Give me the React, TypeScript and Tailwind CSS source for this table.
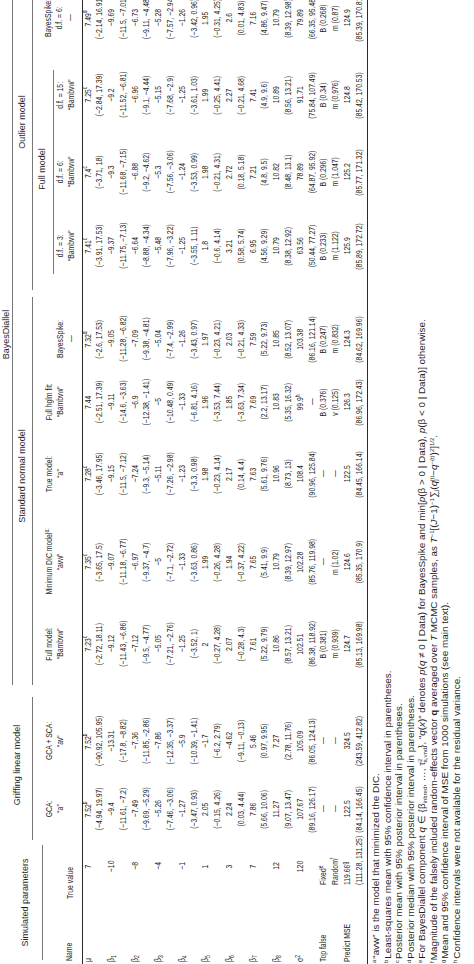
import { Fragment } from "react";

// one track per table column; widths keep each column centred where the scan has it
const grid =
  "grid grid-cols-[68px_60px_54px_82px_112px_52px_124px_20px_106px_80px_68px_86px_68px]";

type Row = { name: string; sub?: string; truth: string; special?: boolean; cells: string[] };

const rows: Row[] = [
  {
    name: "μ",
    truth: "7",
    cells: [
      "7.52^b|(−4.94, 19.97)",
      "7.52^b|(−90.92, 105.95)",
      "7.23^c|(−2.72, 18.11)",
      "7.35^c|(−3.65, 17.5)",
      "7.28^c|(−3.46, 17.95)",
      "7.44|(−2.51, 17.39)",
      "7.32^d|(−2.6, 17.53)",
      "7.41^c|(−3.91, 17.53)",
      "7.4^c|(−3.71, 18)",
      "7.25^c|(−2.84, 17.39)",
      "7.49^d|(−2.14, 16.91)",
    ],
  },
  {
    name: "β",
    sub: "1",
    truth: "−10",
    cells: [
      "−9.4|(−11.61, −7.2)",
      "−13.31|(−17.8, −8.82)",
      "−9.12|(−11.43, −6.86)",
      "−9.07|(−11.18, −6.77)",
      "−9.15|(−11.5, −7.12)",
      "−9.11|(−14.6, −3.63)",
      "−9.05|(−11.28, −6.82)",
      "−9.37|(−11.75, −7.13)",
      "−9.3|(−11.68, −7.15)",
      "−9.2|(−11.52, −6.81)",
      "−9.69|(−11.5, −7.01)",
    ],
  },
  {
    name: "β",
    sub: "2",
    truth: "−8",
    cells: [
      "−7.49|(−9.69, −5.29)",
      "−7.36|(−11.85, −2.86)",
      "−7.12|(−9.5, −4.77)",
      "−6.97|(−9.37, −4.7)",
      "−7.24|(−9.3, −5.14)",
      "−6.9|(−12.38, −1.41)",
      "−7.09|(−9.38, −4.81)",
      "−6.64|(−8.88, −4.34)",
      "−6.88|(−9.2, −4.62)",
      "−6.96|(−9.1, −4.44)",
      "−6.73|(−9.11, −4.48)",
    ],
  },
  {
    name: "β",
    sub: "3",
    truth: "−4",
    cells: [
      "−5.26|(−7.46, −3.06)",
      "−7.86|(−12.35, −3.37)",
      "−5.05|(−7.21, −2.76)",
      "−5|(−7.1, −2.72)",
      "−5.11|(−7.26, −2.98)",
      "−5|(−10.48, 0.49)",
      "−5.04|(−7.4, −2.99)",
      "−5.48|(−7.96, −3.22)",
      "−5.3|(−7.56, −3.06)",
      "−5.15|(−7.68, −2.9)",
      "−5.28|(−7.57, −2.94)",
    ],
  },
  {
    name: "β",
    sub: "4",
    truth: "−1",
    cells: [
      "−1.27|(−3.47, 0.93)",
      "−5.9|(−10.39, −1.41)",
      "−1.25|(−3.52, 1)",
      "−1.33|(−3.63, 0.86)",
      "−1.23|(−3.3, 0.98)",
      "−1.33|(−6.81, 4.16)",
      "−1.26|(−3.43, 0.97)",
      "−1.25|(−3.55, 1.11)",
      "−1.24|(−3.53, 0.99)",
      "−1.25|(−3.61, 1.03)",
      "−1.26|(−3.42, 0.96)",
    ],
  },
  {
    name: "β",
    sub: "5",
    truth: "1",
    cells: [
      "2.05|(−0.15, 4.26)",
      "−1.7|(−6.2, 2.79)",
      "2|(−0.27, 4.28)",
      "1.99|(−0.26, 4.28)",
      "1.98|(−0.23, 4.14)",
      "1.96|(−3.53, 7.44)",
      "1.97|(−0.23, 4.21)",
      "1.8|(−0.6, 4.14)",
      "1.98|(−0.21, 4.31)",
      "1.99|(−0.25, 4.41)",
      "1.95|(−0.31, 4.25)",
    ],
  },
  {
    name: "β",
    sub: "6",
    truth: "3",
    cells: [
      "2.24|(0.03, 4.44)",
      "−4.62|(−9.11, −0.13)",
      "2.07|(−0.28, 4.3)",
      "1.94|(−0.37, 4.22)",
      "2.17|(0.14, 4.4)",
      "1.85|(−3.63, 7.34)",
      "2.03|(−0.21, 4.33)",
      "3.21|(0.58, 5.74)",
      "2.72|(0.18, 5.18)",
      "2.27|(−0.21, 4.68)",
      "2.6|(0.01, 4.83)",
    ],
  },
  {
    name: "β",
    sub: "7",
    truth: "7",
    cells: [
      "7.86|(5.66, 10.06)",
      "5.46|(0.97, 9.95)",
      "7.61|(5.22, 9.79)",
      "7.65|(5.41, 9.9)",
      "7.63|(5.61, 9.76)",
      "7.69|(2.2, 13.17)",
      "7.59|(5.22, 9.73)",
      "6.95|(4.56, 9.29)",
      "7.21|(4.8, 9.5)",
      "7.41|(4.9, 9.6)",
      "7.16|(4.86, 9.47)",
    ],
  },
  {
    name: "β",
    sub: "8",
    truth: "12",
    cells: [
      "11.27|(9.07, 13.47)",
      "7.27|(2.78, 11.76)",
      "10.86|(8.57, 13.21)",
      "10.79|(8.39, 12.97)",
      "10.96|(8.73, 13)",
      "10.83|(5.35, 16.32)",
      "10.85|(8.52, 13.07)",
      "10.79|(8.38, 12.92)",
      "10.82|(8.48, 13.1)",
      "10.89|(8.56, 13.21)",
      "10.79|(8.39, 12.98)",
    ],
  },
  {
    name: "σ",
    sub: "²",
    truth: "120",
    cells: [
      "107.67|(89.16, 126.17)",
      "105.09|(86.05, 124.13)",
      "102.51|(86.38, 118.92)",
      "102.28|(85.76, 119.98)",
      "108.4|(90.96, 125.84)",
      "99.9^h|—",
      "103.38|(86.16, 121.14)",
      "63.56|(50.44, 77.27)",
      "78.89|(64.87, 95.92)",
      "91.71|(75.84, 107.49)",
      "79.89|(66.35, 95.48)",
    ],
  },
  {
    name: "Top false",
    truth: "Fixed^e|Random^f",
    special: true,
    cells: [
      "—|—",
      "—|—",
      "B (0.381)|m (0.939)",
      "—|m (1.02)",
      "—|—",
      "B (0.376)|v (0.125)",
      "B (0.247)|m (0.832)",
      "B (0.233)|m (1.122)",
      "B (0.296)|m (1.047)",
      "B (0.34)|m (0.976)",
      "B (0.268)|m (0.87)",
    ],
  },
  {
    name: "Predict MSE",
    truth: "119.66^g|(111.28, 131.25)",
    special: true,
    cells: [
      "122.5|(84.14, 166.45)",
      "324.5|(243.59, 412.82)",
      "124.7|(85.13, 169.98)",
      "124.6|(85.35, 170.9)",
      "122.5|(84.45, 166.14)",
      "126.3|(86.96, 172.43)",
      "124.3|(84.62, 169.96)",
      "125.9|(85.89, 172.72)",
      "125.2|(85.77, 171.32)",
      "124.8|(85.42, 170.53)",
      "124.9|(85.39, 170.81)",
    ],
  },
];

const heads = [
  { cls: "col-start-3 row-start-3 row-end-5 pt-[11px]", lines: ["GCA:", "“a”"] },
  { cls: "col-start-4 row-start-3 row-end-5 pt-[11px]", lines: ["GCA + SCA:", "“av”"] },
  { cls: "col-start-5 row-start-3 row-end-5 pt-[11px]", lines: ["Full model:", "“Bambvw”"] },
  { cls: "col-start-6 row-start-3 row-end-5 pt-[11px]", lines: ["Minimum DIC model^a:", "“avw”"] },
  { cls: "col-start-7 row-start-3 row-end-5 pt-[11px]", lines: ["True model:", "“a”"] },
  { cls: "col-start-8 row-start-3 row-end-5 pt-[11px]", lines: ["Full hglm fit:", "“Bambvw”"] },
  { cls: "col-start-9 row-start-3 row-end-5 pt-[22px]", lines: ["BayesSpike:", "—"] },
  { cls: "col-start-10 row-start-4 pt-[1px]", lines: ["d.f. = 3:", "“Bambvw”"] },
  { cls: "col-start-11 row-start-4 pt-[1px]", lines: ["d.f. = 6:", "“Bambvw”"] },
  { cls: "col-start-12 row-start-4 pt-[1px]", lines: ["d.f. = 15:", "“Bambvw”"] },
  { cls: "col-start-13 row-start-3 row-end-5 pt-[10px]", lines: ["BayesSpike:", "d.f. = 6:", "—"] },
];

// the scan's face is a condensed sans: squeeze Liberation Sans sideways
function Txt({ t, left }: { t: string; left?: boolean }) {
  const [main, sup] = t.split("^");
  return (
    <span className={`inline-block whitespace-nowrap scale-x-[0.76] ${left ? "origin-left" : ""}`}>
      {main}
      {sup && <sup className="text-[6.5px]">{sup}</sup>}
    </span>
  );
}

function Header() {
  return (
    <div className={`${grid} grid-rows-[13px_20px_21px_27.5px] border-b-[1.5px] border-[#2a2a2a]`}>
      <div className="col-start-5 col-end-14 row-start-1 min-w-0">
        <div className="ml-[15px] h-[13px] border-b border-[#777] flex justify-center text-[9px] leading-[12px]">
          BayesDiallel
        </div>
      </div>

      <div className="col-start-1 col-end-3 row-start-2 row-end-4 min-w-0">
        <div className="ml-[4px] w-[115px] h-[30px] border-b border-[#777] flex justify-center pt-[7px] text-[9px] leading-[11px]">
          <span className="whitespace-nowrap">Simulated parameters</span>
        </div>
      </div>
      <div className="col-start-3 col-end-5 row-start-2 min-w-0">
        <div className="-ml-[4px] w-[143px] h-[20px] border-b border-[#777] flex justify-center pl-[7px] text-[9px] leading-[8px]">
          <span className="whitespace-nowrap">Griffing linear model</span>
        </div>
      </div>
      <div className="col-start-5 col-end-10 row-start-2 min-w-0">
        <div className="ml-[15px] w-[388px] h-[20px] border-b border-[#777] flex justify-center pt-[4px] pl-[30px] text-[9px] leading-[10px]">
          <span className="whitespace-nowrap">Standard normal model</span>
        </div>
      </div>
      <div className="col-start-10 col-end-14 row-start-2 min-w-0">
        <div className="-ml-[4px] h-[20px] border-b border-[#777] flex justify-center pt-[4px] pl-[30px] text-[9px] leading-[10px]">
          <span className="whitespace-nowrap">Outlier model</span>
        </div>
      </div>
      <div className="col-start-10 col-end-13 row-start-3 min-w-0">
        <div className="ml-[12px] w-[204px] h-[21px] border-b border-[#777] flex justify-center pt-[4px] pl-[6px] text-[9px] leading-[10px]">
          <span className="whitespace-nowrap">Full model</span>
        </div>
      </div>

      <div className="col-start-1 row-start-3 row-end-5 min-w-0 pt-[31px] pl-[3px] text-[9px] leading-[11px]">
        <Txt t="Name" left />
      </div>
      <div className="col-start-2 row-start-3 row-end-5 min-w-0 flex justify-center pt-[32px] text-[9px] leading-[11px]">
        <span className="mr-[34px]">
          <Txt t="True value" />
        </span>
      </div>
      {heads.map((h) => (
        <div key={h.cls} className={`${h.cls} min-w-0 flex flex-col items-center text-[9px] leading-[11px]`}>
          {h.lines.map((l) => (
            <Txt key={l} t={l} />
          ))}
        </div>
      ))}
    </div>
  );
}

function Cell({ t, left }: { t: string; left?: boolean }) {
  const [a, b] = t.split("|");
  return (
    <div className={`min-w-0 flex flex-col ${left ? "items-start pl-[11px]" : "items-center"}`}>
      <div className="h-[11.8px]">
        <Txt t={a} left={left} />
      </div>
      <div className="h-[11.8px]">{b && <Txt t={b} left={left} />}</div>
    </div>
  );
}

function Body() {
  return (
    <div className={`${grid} pb-[1px] border-b-[1.5px] border-[#2a2a2a] text-[9px] leading-[11.8px]`}>
      {rows.map((r, i) => (
        <Fragment key={i}>
          <div className="min-w-0 h-[23.6px] pl-[2px]">
            <span className="inline-block whitespace-nowrap scale-x-[0.76] origin-left">
              {r.name}
              {r.sub && (r.sub === "²" ? <sup className="text-[6.5px]">2</sup> : <sub className="text-[6.5px]">{r.sub}</sub>)}
            </span>
          </div>
          {r.special ? <Cell t={r.truth} left /> : <Cell t={r.truth} />}
          {r.cells.map((c, j) => (
            <Cell key={j} t={c} />
          ))}
        </Fragment>
      ))}
    </div>
  );
}

function Note({ m, children }: { m: string; children: React.ReactNode }) {
  return (
    <div className="h-[11.5px] leading-[11.5px] whitespace-nowrap pl-[1px]">
      <sup className="text-[6px] mr-[1px]">{m}</sup>
      {children}
    </div>
  );
}

function Notes() {
  return (
    <div className="mt-[2.5px] text-[9.9px]">
      <Note m="a">“avw” is the model that minimized the DIC.</Note>
      <Note m="b">Least-squares mean with 95% confidence interval in parentheses.</Note>
      <Note m="c">Posterior mean with 95% posterior interval in parentheses.</Note>
      <Note m="d">Posterior median with 95% posterior interval in parentheses.</Note>
      <Note m="e">
        For BayesDiallel component <i>q</i> ∈ {"{"}β<sub className="text-[6px]">inbred</sub>, …, τ
        <sup className="text-[6px]">2</sup>
        <sub className="text-[6px] -ml-[4px]">a,vnd</sub>
        {"}"}, “<i>q</i>(<i>x</i>)” denotes <i>p</i>(<i>q</i> ≠ 0 | Data) for BayesSpike and min[<i>p</i>(β &gt; 0 |
        Data), <i>p</i>(β &lt; 0 | Data)] otherwise.
      </Note>
      <Note m="f">
        Magnitude of the falsely included random-effects vector <b>q</b> averaged over <i>T</i> MCMC samples, as{" "}
        <i>T</i>
        <sup className="text-[6px]">−1</sup>[(<i>J</i>−1)<sup className="text-[6px]">−1</sup>∑
        <sub className="text-[6px]">j</sub>(<i>q</i>
        <sub className="text-[6px]">j</sub>
        <sup className="text-[6px] -ml-[2px]">(t)</sup>−<i>q</i>
        <sup className="text-[6px]">−(t)</sup>)<sup className="text-[6px]">2</sup>]<sup className="text-[6px]">1/2</sup>.
      </Note>
      <Note m="g">Mean and 95% confidence interval of MSE from 1000 simulations (see main text).</Note>
      <Note m="h">Confidence intervals were not available for the residual variance.</Note>
    </div>
  );
}

export default function App() {
  return (
    <div className="w-[474px] h-[964px] overflow-hidden bg-white">
      <div className="w-[964px] h-[474px] origin-top-left [transform:translateY(964px)_rotate(-90deg)] text-[#1f1f1f] font-['Liberation_Sans',Arial,sans-serif]">
        <Header />
        <Body />
        <Notes />
      </div>
    </div>
  );
}
